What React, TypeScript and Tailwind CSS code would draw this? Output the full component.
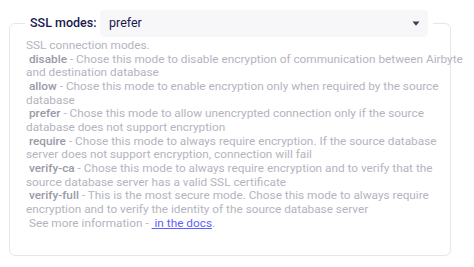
const modes = [
  {
    name: 'disable',
    lead: 'Chose this mode to disable encryption of communication between Airbyte',
    text: 'and destination database',
  },
  {
    name: 'allow',
    text: 'Chose this mode to enable encryption only when required by the source database',
  },
  {
    name: 'prefer',
    text: 'Chose this mode to allow unencrypted connection only if the source database does not support encryption',
  },
  {
    name: 'require',
    text: 'Chose this mode to always require encryption. If the source database server does not support encryption, connection will fail',
  },
  {
    name: 'verify-ca',
    text: 'Chose this mode to always require encryption and to verify that the source database server has a valid SSL certificate',
  },
  {
    name: 'verify-full',
    text: 'This is the most secure mode. Chose this mode to always require encryption and to verify the identity of the source database server',
  },
]

export default function App() {
  return (
    <div className="w-[474px] h-[267px] bg-white font-['Roboto',sans-serif] pt-[10px] pl-[9px]">
      <fieldset className="w-[440px] border border-[#e6e6ec] rounded-[6px] p-0 pb-[25px]">
        <legend className="ml-[15px] px-[5px] whitespace-nowrap">
          <div className="flex items-center gap-[8px]">
            <span className="w-[62px] text-[12.5px] font-medium text-[#1a194d]">SSL modes:</span>
            <div className="w-[328px] h-[27px] bg-[#f7f7fa] rounded-[4px] flex items-center justify-between pl-[9px] pr-[6px]">
              <span className="text-[12.5px] text-[#1a194d]">prefer</span>
              <svg width="10" height="6" viewBox="0 0 10 6" className="mr-[1px]">
                <path d="M1.5 0.5h7L5 4.8z" fill="#3f3f51" />
              </svg>
            </div>
          </div>
        </legend>
        <div className="ml-[16px] w-[424px] text-[11.8px] leading-[13.65px] text-[#b4b4c0] pt-[2px]">
          <div>SSL connection modes.</div>
          {modes.map((m) => (
            <div key={m.name}>
              {m.lead ? (
                <>
                  <span className="whitespace-nowrap">
                    <span className="font-medium text-[#9a9aa8]">&nbsp;{m.name}</span> - {m.lead}
                  </span>
                  <br />
                  {m.text}
                </>
              ) : (
                <>
                  <span className="font-medium text-[#9a9aa8]">&nbsp;{m.name}</span> - {m.text}
                </>
              )}
            </div>
          ))}
          <div>
            &nbsp;See more information -{' '}
            <a href="#" className="text-[#615eff] underline">
              &nbsp;in the docs
            </a>
            .
          </div>
        </div>
      </fieldset>
    </div>
  )
}
